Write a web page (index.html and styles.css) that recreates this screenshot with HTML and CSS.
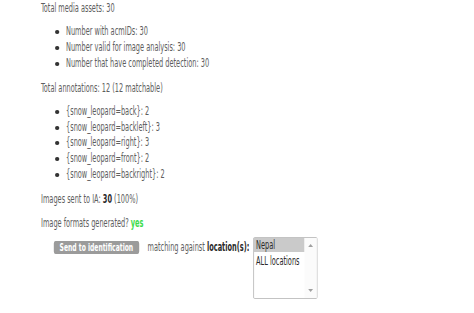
FILE: index.html
```html
<!DOCTYPE html>
<html lang="en">
	<head>
		<meta charset="utf-8">
		<title>Identification status</title>
		<link rel="stylesheet" href="styles.css">
	</head>
	<body>
		<div id="ia-summary">
			<div class="condensed">
				<p>Total media assets: 30</p>
				<ul>
					<li>Number with acmIDs: 30</li>
					<li>Number valid for image analysis: 30</li>
					<li>Number that have completed detection: 30</li>
				</ul>
				<p>Total annotations: 12 (12 matchable)</p>
				<ul>
					<li>{snow_leopard=back}: 2</li>
					<li>{snow_leopard=backleft}: 3</li>
					<li>{snow_leopard=right}: 3</li>
					<li>{snow_leopard=front}: 2</li>
					<li>{snow_leopard=backright}: 2</li>
				</ul>
				<p>Images sent to IA: <b>30</b> (100%)</p>
				<p>Image formats generated? <span class="yes">yes</span></p>
				<div class="send-row">
					<button id="send-button">Send to identification</button>
					<span class="matching">matching against <b>location(s):</b></span>
					<div id="location-select" role="listbox" aria-multiselectable="true">
						<div class="options">
							<div class="option selected" role="option">Nepal</div>
							<div class="option" role="option">ALL locations</div>
						</div>
						<div class="scrollbar">
							<span class="arrow up"></span>
							<span class="arrow down"></span>
						</div>
					</div>
				</div>
			</div>
		</div>
	</body>
</html>
```

FILE: styles.css
```css
body {
	margin: 0;
	overflow: hidden;
	font-family: 'DejaVu Sans Condensed', 'DejaVu Sans', sans-serif;
	font-size: 12px;
	color: #5e5e5e;
}
#ia-summary {
	padding-left: 41px;
}
/* no narrow webfont here, so squeeze the whole block sideways */
.condensed {
	width: 700px;
	transform: scaleX(0.61);
	transform-origin: 0 0;
}
p {
	margin: 0 0 8px 0;
	line-height: 16px;
}
ul {
	margin: 0 0 8.5px 0;
	padding-left: 41px;
	list-style: none;
	line-height: 15.8px;
}
li {
	position: relative;
}
li::before {
	content: '';
	position: absolute;
	left: -18px;
	top: 6px;
	width: 6.5px;
	height: 4px;
	border-radius: 50%;
	background: #333;
}
b {
	color: #2a2a2a;
}
.yes {
	color: #3bdc4c;
	font-weight: bold;
}
.send-row {
	display: flex;
	align-items: flex-start;
	margin-top: -2px;
	padding-left: 21px;
}
#send-button {
	font-family: inherit;
	font-size: 11px;
	font-weight: bold;
	color: white;
	background: #9b9b9b;
	border: none;
	border-radius: 3px;
	padding: 0 9.5px;
	height: 13px;
	line-height: 13px;
	margin-top: 3.5px;
}
.matching {
	margin-left: 14px;
	padding-top: 2px;
	line-height: 16px;
}
#location-select {
	display: flex;
	width: 103px;
	height: 60px;
	margin-left: 7px;
	border: 1px solid #b4b4b4;
	border-radius: 2px;
	background: white;
	color: #2a2a2a;
}
.options {
	flex: 1;
}
.option {
	padding-left: 3px;
	line-height: 14px;
	height: 14px;
	margin-bottom: 1.5px;
}
.option.selected {
	background: #cacaca;
}
.scrollbar {
	width: 20px;
	display: flex;
	flex-direction: column;
	justify-content: space-between;
	align-items: center;
	padding: 6px 0;
	background: #fbfbfb;
}
.arrow {
	width: 0;
	height: 0;
	border-left: 4px solid transparent;
	border-right: 4px solid transparent;
}
.arrow.up {
	border-bottom: 3px solid #a0a0a0;
}
.arrow.down {
	border-top: 3px solid #a0a0a0;
}
```
